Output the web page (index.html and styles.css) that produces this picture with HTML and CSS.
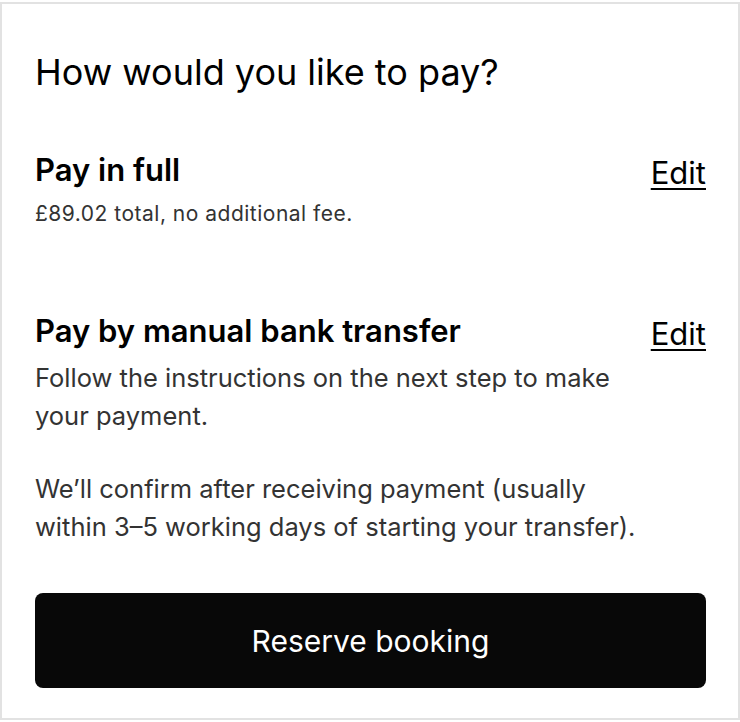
FILE: index.html
```html
<!DOCTYPE html>
<html lang="en">
<head>
    <meta charset="UTF-8">
    <meta name="viewport" content="width=device-width, initial-scale=1.0">
    <title>Payment</title>
    <link rel="stylesheet" href="styles.css">
</head>
<body>
    <div class="pay-card">
        <h1>How would you like to pay?</h1>

        <div class="option option-full">
            <div class="option-head">
                <h2>Pay in full</h2>
                <a href="#" class="edit">Edit</a>
            </div>
            <p class="price">£89.02 total, no additional fee.</p>
        </div>

        <div class="option option-bank">
            <div class="option-head">
                <h2>Pay by manual bank transfer</h2>
                <a href="#" class="edit">Edit</a>
            </div>
            <p class="desc">Follow the instructions on the next step to make your payment.</p>
            <p class="desc second">We’ll confirm after receiving payment (usually within 3–5 working days of starting your transfer).</p>
        </div>

        <button class="reserve">Reserve booking</button>
    </div>
</body>
</html>
```

FILE: styles.css
```css
body {
    margin: 0;
    font-family: Inter, "Liberation Sans", sans-serif;
    background-color: #fff;
}

.pay-card {
    box-sizing: border-box;
    width: 740px;
    height: 718px;
    margin-top: 2px;
    border: 2px solid #e2e2e2;
    padding: 46px 32px 0 33px;
    display: flex;
    flex-direction: column;
}

h1 {
    margin: 0;
    font-size: 36px;
    line-height: 44px;
    font-weight: normal;
    color: #000;
}

.option-head {
    display: flex;
    justify-content: space-between;
    align-items: flex-start;
}

h2 {
    margin: 0;
    font-size: 31px;
    line-height: 38px;
    font-weight: 600;
    color: #000;
}

.edit {
    padding-top: 3px;
    font-size: 31px;
    line-height: 38px;
    color: #000;
    text-decoration: underline;
    text-decoration-thickness: 2px;
    text-underline-offset: 4px;
}

.option-full {
    margin-top: 57px;
}

.price {
    margin: 8px 0 0;
    font-size: 21px;
    line-height: 28px;
    letter-spacing: 0.5px;
    color: #333;
}

.option-bank {
    margin-top: 84px;
}

.desc {
    margin: 6px 0 0;
    font-size: 25.5px;
    line-height: 38px;
    color: #333;
    max-width: 615px;
}

.desc.second {
    margin-top: 35px;
}

.reserve {
    margin-top: 47px;
    height: 95px;
    width: 100%;
    border: none;
    border-radius: 8px;
    background-color: #080808;
    color: #fff;
    font-family: inherit;
    font-size: 30px;
}
```
